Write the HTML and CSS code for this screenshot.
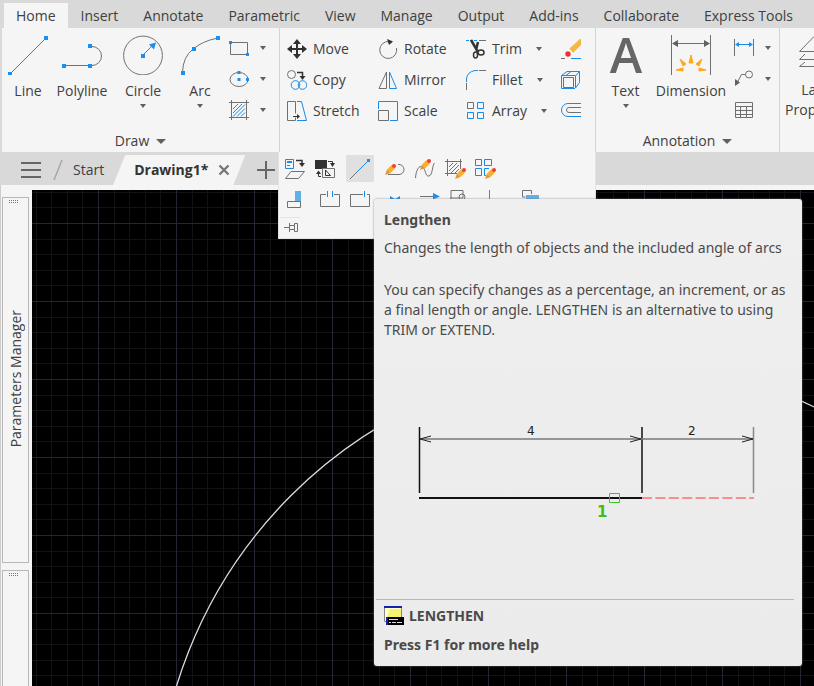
FILE: index.html
```html
<!DOCTYPE html>
<html lang="en">
<head>
<meta charset="utf-8">
<title>Drawing1</title>
<link rel="stylesheet" href="styles.css">
</head>
<body>
<nav class="tabs">
  <a class="tab tab-on" href="#home">Home</a>
  <a class="tab" href="#insert">Insert</a>
  <a class="tab" href="#annotate">Annotate</a>
  <a class="tab" href="#parametric">Parametric</a>
  <a class="tab" href="#view">View</a>
  <a class="tab" href="#manage">Manage</a>
  <a class="tab" href="#output">Output</a>
  <a class="tab" href="#addins">Add-ins</a>
  <a class="tab" href="#collaborate">Collaborate</a>
  <a class="tab" href="#express">Express Tools</a>
</nav>

<section class="ribbon">
  <div class="panel draw">
    <div class="tools">
      <button class="big"><svg width="40" height="40"><path class="g" d="M4 37L37 4"/><path class="bf" d="M0 37h4v4h-4zM36 1h4v4h-4z"/></svg>Line</button>
      <button class="big"><svg width="40" height="40"><path class="g" d="M4 30.500H26M30 11.500a9.500 9.500 0 0 1 0 19"/><path class="bf" d="M0 29h4v4h-4zM26 29h4v4h-4zM26 9h4v4h-4z"/></svg>Polyline</button>
      <button class="big"><svg width="40" height="40"><circle class="g" cx="20" cy="20.500" r="19.400"/><path class="b" d="M20 20L29 11"/><path class="bf" d="M18 19h4v4h-4zM26 9.500L33 7.500 31 14.500z"/></svg>Circle<i class="caret"></i></button>
      <button class="big"><svg width="40" height="40"><path class="g" d="M2.500 37Q3 22 13 14T36 3.500"/><path class="bf" d="M1 36h4v4h-4zM12 12h4v4h-4zM36 1h4v4h-4z"/></svg>Arc<i class="caret"></i></button>
      <div class="minis">
        <button class="mini" aria-label="Rectangle"><svg width="20" height="20"><path class="g" d="M1.500 4.500h17v12h-17z"/><path class="bf" d="M0 3h3v3h-3zM17 15h3v3h-3z"/></svg><i class="caret"></i></button>
        <button class="mini" aria-label="Ellipse"><svg width="20" height="20"><ellipse class="g" cx="10" cy="10.500" rx="9" ry="7"/><path class="bf" d="M8.500 2h3v3h-3zM8.500 9h3v3h-3zM17 9h3v3h-3z"/></svg><i class="caret"></i></button>
        <button class="mini" aria-label="Hatch"><svg width="20" height="20"><path class="g" d="M0 2.500h20M0 17.500h20M2.500 0v20M17.500 0v20"/><path class="b" d="M4 9l5-5M4 13l9-9M4 16.500L16 4.500M8 16.500l8-8M12 16.500l4-4"/></svg><i class="caret"></i></button>
      </div>
    </div>
    <button class="title">Draw<i class="caret wide"></i></button>
  </div>

  <div class="panel modify">
    <div class="cmds">
      <button class="cmd"><svg width="20" height="20"><path class="kf" d="M10 0l4 5h-3v4h4V6l5 4-5 4v-3h-4v4h3l-4 5-4-5h3v-4H5v3l-5-4 5-4v3h4V5H6z"/></svg>Move</button>
      <button class="cmd"><svg width="20" height="20"><path class="g" d="M11 2.500A8.500 8.500 0 1 0 18.500 9"/><path class="kf" d="M9 0l6 2.500L11 6z"/></svg>Rotate</button>
      <button class="cmd"><svg width="20" height="20"><path class="b dash" d="M0 1.500h11"/><path class="g" d="M13 1.500h7"/><path class="k thick" d="M5 1l7 12M12 3l-2 8"/><ellipse class="k med" cx="9.500" cy="16" rx="2" ry="3"/><ellipse class="k med" cx="15" cy="13.500" rx="3" ry="2.500"/></svg>Trim<i class="caret"></i></button>
      <button class="cmd" aria-label="Erase"><svg width="20" height="20"><path fill="#f5b746" d="M19 0h1v6L12 14 8 10z"/><path fill="#fff" d="M8 10l4 4-2 2-4-4z"/><circle cx="7" cy="15" r="2.700" fill="#ef3036"/><path class="g" d="M0 19.500h4"/><path class="b" d="M10 19.500h10"/></svg></button>

      <button class="cmd"><svg width="20" height="20"><circle class="g" cx="4.500" cy="4.500" r="4"/><circle class="b" cx="8.500" cy="15" r="4.300"/><circle class="b" cx="15.500" cy="15" r="4.300"/><path class="k med" d="M10 2.500h5.500v4"/><path class="kf" d="M12.500 6h6l-3 4z"/></svg>Copy</button>
      <button class="cmd"><svg width="20" height="20"><path class="g" d="M8.500 2v16.500H1z"/><path class="b" d="M11.500 2v16.500H18.500z"/></svg>Mirror</button>
      <button class="cmd"><svg width="20" height="20"><path class="b" d="M.5 12V9Q1 2 9 .5h3"/><path class="g" d="M13 .5h7M.5 13v7"/></svg>Fillet<i class="caret"></i></button>
      <button class="cmd" aria-label="Explode"><svg width="20" height="20"><path class="g" d="M2.500 7.500h10v10h-10z"/><path class="b" d="M.5 18.500V5.500L6 1.500h12.500v11L14.500 18V6L18.500 1.500M.5 5.500h14M.5 18.500h13.500M5 5.500l5-4"/></svg></button>

      <button class="cmd"><svg width="20" height="20"><path class="g" d="M.5 .5h8v12M.5 .5v19h8v-3"/><path class="b" d="M10 .5h4.500L19.500 19.500H10"/><path class="k" d="M6 15.500h5"/><path class="kf" d="M10 13l3 2.500-3 2.500z"/></svg>Stretch</button>
      <button class="cmd"><svg width="20" height="20"><path class="b" d="M.5 8V.5h19v19H12"/><path class="g" d="M.5 9.500h10v10H.5z"/></svg>Scale</button>
      <button class="cmd"><svg width="20" height="20"><path class="g" d="M1.500 1.500h6v6h-6z"/><path class="b" d="M11.500 1.500h6v6h-6zM1.500 11.500h6v6h-6zM11.500 11.500h6v6h-6z"/></svg>Array<i class="caret"></i></button>
      <button class="cmd" aria-label="Offset"><svg width="20" height="20"><path class="b" d="M20 2.500H7a6.500 6.500 0 0 0 0 13h13"/><path class="g" d="M20 6.500H8a2.500 2.500 0 0 0 0 5h12"/></svg></button>
    </div>

    <div class="flyout">
      <div class="fly-row">
        <button class="fly" aria-label="Set to ByLayer"><svg width="20" height="20"><path class="b" d="M.5 .5h8v9h-8z"/><path class="bf" d="M2 2h5v2H2zM2 6h3v1H2z"/><path class="k med" d="M11 1.500h6v3"/><path class="kf" d="M14 4h6l-3 4z"/><path class="g" d="M6 12.500h13.500l-6 7H.5z"/></svg></button>
        <button class="fly" aria-label="Change Space"><svg width="20" height="20"><path class="kf" d="M0 1h12v9H0zM15 4h5l-2.500 4zM1 15l2.500-3.500L6 15z"/><path class="k" d="M13 2.500h4.500v2M3.500 14v3.500H6"/><path class="g light" d="M7.500 9.500h12v9h-12z"/><path class="k" d="M10.500 11v5.500h5z"/></svg></button>
        <button class="fly fly-on" aria-label="Lengthen"><svg width="20" height="20"><path class="g" d="M0 20L7 13"/><path class="b" d="M7 13l11-11"/><path class="bf" d="M17 0h3v3h-3z"/></svg></button>
        <button class="fly" aria-label="Edit Polyline"><svg width="20" height="20"><path class="g" d="M3 15.500h11a5 5 0 0 0 0-10h-1"/><use href="#pencil" y="5"/></svg></button>
        <button class="fly" aria-label="Edit Spline"><svg width="20" height="20"><path class="g" d="M.5 19C1 11 4 6 7.500 8S10 18 14 17 17 6 19.500 4"/><use href="#pencil" x="5"/></svg></button>
        <button class="fly" aria-label="Edit Hatch"><svg width="20" height="20"><path class="g" d="M0 2.500h17M0 14.500h12M2.500 0v17M15.500 0v10M4 8l4-4M4 12l8-8M6 14l8-8M10 14l4-4"/><use href="#pencil" x="10" y="9"/></svg></button>
        <button class="fly" aria-label="Edit Array"><svg width="20" height="20"><path class="g" d="M.5 .5h6v6h-6z"/><path class="b" d="M9.500 .5h7v6h-7zM.5 9.500h6v7h-6zM14 9.500H9.500v7H11"/><use href="#pencil" x="10" y="9"/></svg></button>
      </div>
      <div class="fly-row low">
        <button class="fly" aria-label="Align"><svg width="20" height="20"><path fill="#62aee5" d="M10 0h6v11h-6z"/><path class="g" d="M2.500 10.500h13v6h-13z"/></svg></button>
        <button class="fly lead" aria-label="Break"><svg width="20" height="20"><path class="g" d="M6 3.500H.5v12h19v-12H14"/><path class="b" d="M7.500 0v6M12.500 0v6"/></svg></button>
        <button class="fly" aria-label="Break at Point"><svg width="20" height="20"><path class="g" d="M13 3.500H.5v12h19v-12H17"/><path class="b" d="M14.500 0v6"/></svg></button>
        <button class="fly lead" aria-label="Join"><svg width="20" height="20"><path class="bf" d="M5 5l5 3 5-3v6H5z"/></svg></button>
        <button class="fly lead" aria-label="Reverse"><svg width="20" height="20"><path class="g" d="M0 5.500h15"/><path class="bf" d="M13 2l7 3.500-7 3z"/></svg></button>
        <button class="fly" aria-label="Copy Nested Objects"><svg width="20" height="20"><path class="g" d="M1 8V-.5h12V7H0"/><circle class="g" cx="12" cy="6" r="3"/></svg></button>
        <button class="fly" aria-label="Delete Duplicates"><svg width="20" height="20"><path stroke="#b5702a" d="M9.500 -1v10"/></svg></button>
        <button class="fly order" aria-label="Draw Order"><svg width="20" height="20"><path class="g" d="M9.500 3V-.5H.5V6h3"/><path fill="#62aee5" d="M4 4h13v8H4z"/></svg><i class="caret"></i></button>
      </div>
      <button class="pin" aria-label="Pin panel"><svg width="16" height="12"><path class="g" d="M0 5.500h5M5.500 1v9M5.500 3.500h5v4h-5M10.500 1.500h3v8h-3z"/></svg></button>
    </div>

    <aside class="tip" role="tooltip">
      <h2>Lengthen</h2>
      <p class="lead-text">Changes the length of objects and the included angle of arcs</p>
      <p class="more">You can specify changes as a percentage, an increment, or as a final length or angle. LENGTHEN is an alternative to using TRIM or EXTEND.</p>
      <svg class="figure" viewBox="0 0 340 100" width="340" height="100">
        <path stroke="#111" stroke-width="1.500" d="M2.500 4v66M225 4v66"/>
        <path stroke="#888" stroke-width="1.500" d="M336.500 4v66"/>
        <path stroke="#777" stroke-width="1.500" d="M3 16H336"/>
        <path stroke="#222" fill="none" d="M14 13L3 16l11 3M213 13l11 3-11 3M325 13l11 3-11 3"/>
        <path stroke="#111" stroke-width="2" d="M2 75H225"/>
        <path stroke="#fa8d8d" stroke-width="2" stroke-dasharray="10 3.400" d="M225 75H337"/>
        <path stroke="#3fc51c" fill="none" d="M192.500 70.500h10v9h-10z"/>
        <text class="num" x="110" y="12">4</text>
        <text class="num" x="271" y="12">2</text>
        <text class="pick" x="180" y="94">1</text>
      </svg>
      <footer>
        <div class="name"><svg width="20" height="20"><path fill="#ffffc8" stroke="#888" d="M.5 .5h17v15H.5z"/><path fill="#f4f270" d="M6 3h11v8H3z"/><path fill="#1122b5" d="M0 0h18v2H0zM2 11h2v8H2z"/><path d="M4 11h16v8H4z"/><path stroke="#ddd" d="M5 13.500h9M5 16.500h2M8 16.500h4M13 16.500h5"/></svg>LENGTHEN</div>
        <div>Press F1 for more help</div>
      </footer>
    </aside>
  </div>

  <div class="panel annotation">
    <div class="tools">
      <button class="big"><svg class="bleed" width="40" height="40"><text class="letter" x="20" y="38">A</text></svg>Text<i class="caret"></i></button>
      <button class="big"><svg width="40" height="40"><path class="g" d="M.5 0v40M39.500 0v40M3 8.500h34"/><path class="gf" d="M1 8.500L7 5v7zM39 8.500L33 5v7z"/><path fill="#fba919" d="M20 20l2 8h-4zM9 24l6 5-3 2zM31 24l-6 5 3 2zM5 35l7-2v3zM35 35l-7-2v3z" stroke="#fba919"/></svg>Dimension</button>
      <div class="minis">
        <button class="mini" aria-label="Linear"><svg width="20" height="20"><path class="g" d="M.5 1v17M19.500 1v17"/><path class="b" d="M3 6.500h14"/><path class="bf" d="M1 6.500L5 4v5zM19 6.500L15 4v5z"/></svg><i class="caret"></i></button>
        <button class="mini" aria-label="Leader"><svg width="20" height="20"><circle class="g" cx="15" cy="5.500" r="3.500"/><path class="g" d="M11.500 5.500H7.500L3 14"/><path class="gf" d="M1 17V10l5 3.500z"/></svg><i class="caret"></i></button>
        <button class="mini" aria-label="Table"><svg width="20" height="20"><path class="g" d="M1.500 2.500h17v15h-17zM1 6.500h18M1 10.500h18M1 14.500h18M6.500 7v11M12.500 7v11"/></svg></button>
      </div>
    </div>
    <button class="title">Annotation<i class="caret wide"></i></button>
  </div>

  <div class="panel layers">
    <button class="big"><svg width="40" height="40"><path class="g" d="M15 .5L.5 15.500h25L40 .5zM6 18L.5 23.500h25L40 9M6 26L.5 30.500h25L40 17"/></svg>Layer Properties</button>
  </div>
</section>

<div class="files">
  <button class="menu" aria-label="Drawings"><svg width="20" height="18"><path stroke="#666" stroke-width="2" d="M0 2h20M0 9h20M0 16h20"/></svg></button>
  <svg class="slash" width="10" height="20"><path stroke="#a8a8a8" stroke-width="1.500" d="M1 20L9 0"/></svg>
  <a class="file" href="#start">Start</a>
  <div class="file file-on">Drawing1*<button aria-label="Close drawing"><svg width="12" height="12"><path stroke="#777" stroke-width="2.400" d="M1.500 1.500l9 9M10.500 1.500l-9 9"/></svg></button></div>
  <button class="add" aria-label="New drawing"><svg width="18" height="18"><path stroke="#666" stroke-width="2" d="M9 0v18M0 9h18"/></svg></button>
</div>

<main class="work">
  <div class="dock">
    <section class="palette"><i class="grip"></i><span>Parameters Manager</span></section>
    <section class="palette rest"><i class="grip"></i></section>
  </div>
  <svg class="canvas">
    <defs>
      <pattern id="grid" x="66" y="33" width="78" height="78" patternUnits="userSpaceOnUse">
        <path stroke="#111216" d="M16.500 0v78M31.500 0v78M47.500 0v78M62.500 0v78M0 16.500h78M0 31.500h78M0 47.500h78M0 62.500h78"/>
        <path stroke="#232733" d="M.5 0v78M0 .5h78"/>
      </pattern>
      <g id="pencil"><path fill="#f5b02e" d="M2 5.500L6.500 1 10 4.500 5.500 9z"/><path fill="#e5963a" d="M2 5.500L5.500 9 0 11z"/><circle cx="9" cy="2" r="2" fill="#f23a3a"/></g>
    </defs>
    <rect width="100%" height="100%" fill="url(#grid)"/>
    <circle cx="583" cy="630" r="458.500" fill="none" stroke="#dcdcdc" stroke-width="1.300"/>
  </svg>
</main>
</body>
</html>
```
FILE: styles.css
```css
* { box-sizing: border-box; }
body {
  margin: 0;
  height: 100vh;
  display: flex;
  flex-direction: column;
  overflow: hidden;
  background: #d9d9d9;
  color: #404040;
  font: 14px/20px "Open Sans", "Noto Sans", sans-serif;
}
button { font: inherit; color: inherit; background: none; border: 0; padding: 0; }
a { color: inherit; text-decoration: none; }
svg { display: block; flex: none; }
.g { fill: none; stroke: #707070; }
.b { fill: none; stroke: #1a8ae6; }
.k { fill: none; stroke: #333; }
.gf { fill: #606060; }
.bf { fill: #1a8fee; }
.kf { fill: #303030; }
.light { fill: #f5f5f5; }
.med { stroke-width: 1.5; }
.thick { stroke-width: 2.5; }
.dash { stroke-dasharray: 3 1; }
.bleed { overflow: visible; }
.caret { border: 3px solid transparent; border-top: 4px solid #606060; border-bottom: 0; }
.wide { border-width: 5px 5px 0; }

.tabs { display: flex; flex: none; gap: 1px; padding: 3px 0 0 4px; white-space: nowrap; }
.tab { padding: 3px 12px 2px; }
.tab-on { background: #f5f5f5; }

.ribbon { display: flex; flex: none; padding-left: 2px; height: 124px; }
.panel { position: relative; flex: none; display: flex; flex-direction: column; background: #f5f5f5; border-right: 1px solid #d4d4d4; }
.tools { display: grid; flex: 1; padding-top: 7px; align-items: start; }
.draw { width: 278px; }
.draw .tools { grid-template-columns: 52px 56px 66px 48px 1fr; }
.big { display: flex; flex-direction: column; align-items: center; line-height: 20px; }
.big svg { margin-bottom: 6px; }
.big .caret { margin-top: 3px; }
.minis { display: flex; flex-direction: column; gap: 11px; padding: 3px 0 0 5px; }
.mini { display: flex; align-items: center; gap: 11px; }
.title { display: flex; align-items: center; justify-content: center; gap: 7px; height: 24px; padding-top: 2px; }

.modify { width: 316px; }
.cmds { display: grid; grid-template-columns: 91px 88px 95px 1fr; grid-auto-rows: 31px; padding: 5px 0 0 7px; }
.cmd { display: flex; align-items: center; gap: 6px; }
.cmd .caret { margin-left: 8px; }
.flyout { position: absolute; left: -2px; right: -1px; top: 124px; height: 87px; background: #f5f5f5; border: 1px solid #e2e2e2; border-top: 0; padding: 3px 1px 0; z-index: 2; }
.fly-row { display: flex; }
.fly { display: flex; width: 30px; height: 27px; align-items: center; justify-content: center; }
.fly svg { overflow: visible; }
.fly-on { width: 28px; margin: 0 6px; background: #e0e0e0; }
.low { padding-top: 5px; }
.lead { margin-left: 5px; }
.order { width: 50px; gap: 10px; margin-left: 10px; }
.pin { display: flex; align-items: center; width: 20px; height: 20px; padding-left: 4px; margin-top: 3px; border-top: 1px solid #e6e6e6; }

.tip { position: absolute; left: 94px; top: 171px; width: 428px; padding: 11px 10px; z-index: 3; border-radius: 3px; background: linear-gradient(#efefef, #ebebeb); color: #4a4a4a; box-shadow: 0 0 2px #777; font-family: "Noto Sans", "Open Sans", sans-serif; }
.tip h2 { font-size: 14px; line-height: 20px; margin: 0; }
.tip p { margin: 0; }
.tip .lead-text { margin: 8px 0 22px; white-space: nowrap; }
.figure { margin: 83px 0 0 33px; }
.num { font: 12px "DejaVu Sans", sans-serif; fill: #222; }
.pick { font: bold 15px "DejaVu Sans", sans-serif; fill: #3fbf10; }
.tip footer { margin: 76px -2px 0 -8px; padding: 6px 8px 0; border-top: 1px solid #b8b8b8; font-weight: 700; }
.name { display: flex; align-items: center; gap: 5px; margin-bottom: 9px; }

.annotation { width: 184px; }
.annotation .tools { grid-template-columns: 59px 72px 1fr; }
.annotation .minis { padding-left: 7px; }
.letter { font: 600 49px "Open Sans", sans-serif; fill: #666; text-anchor: middle; }
.layers { flex: 1 1 0; min-width: 0; overflow: hidden; padding: 8px 0 0 4px; border-right: 0; }
.layers .big { width: 70px; }
.layers .big svg { margin-bottom: 4px; }

.files { display: flex; flex: none; align-items: center; height: 33px; padding: 3px 0 0 21px; }
.slash { margin: 0 10px 0 12px; }
.file-on { display: flex; align-items: center; gap: 10px; height: 30px; margin: 0 12px 0 9px; padding: 0 15px 0 21px; font-weight: 700; color: #333; background: #f5f5f5; clip-path: polygon(12px 0, 100% 0, calc(100% - 12px) 100%, 0 100%); }

.work { display: flex; flex: 1; min-height: 0; background: #f5f5f5; border-left: 1px solid #ccc; padding-top: 5px; }
.dock { display: flex; flex-direction: column; gap: 7px; width: 31px; padding: 7px 3px 0 1px; }
.palette { display: flex; flex-direction: column; align-items: center; border: 1px solid #b8b8b8; height: 366px; flex: none; }
.palette span { writing-mode: vertical-rl; transform: rotate(180deg); margin: auto 0; padding-top: 8px; line-height: 20px; white-space: nowrap; }
.rest { flex: 1; height: auto; border-bottom: 0; }
.grip { width: 9px; height: 3px; margin: 2px 0 0 6px; align-self: flex-start; background: repeating-linear-gradient(90deg, #777 0 1px, transparent 1px 2px); clip-path: polygon(0 0, 100% 0, 100% 1px, 0 1px, 0 2px, 100% 2px, 100% 3px, 0 3px); }
.canvas { flex: 1; min-width: 0; height: 100%; background: #000; }
```
